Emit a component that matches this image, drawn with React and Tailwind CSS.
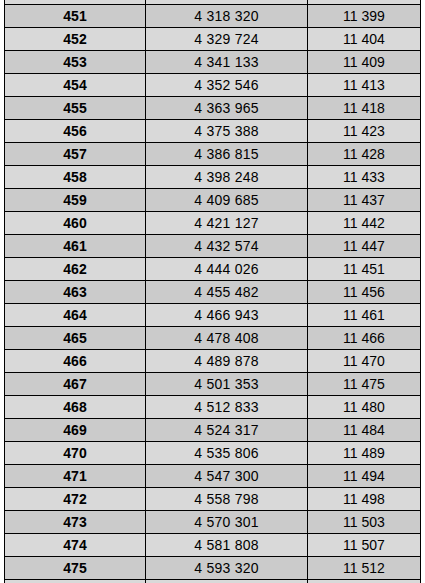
import React from "react";

const rows = [
  [450, "", ""],
  [451, "4 318 320", "11 399"],
  [452, "4 329 724", "11 404"],
  [453, "4 341 133", "11 409"],
  [454, "4 352 546", "11 413"],
  [455, "4 363 965", "11 418"],
  [456, "4 375 388", "11 423"],
  [457, "4 386 815", "11 428"],
  [458, "4 398 248", "11 433"],
  [459, "4 409 685", "11 437"],
  [460, "4 421 127", "11 442"],
  [461, "4 432 574", "11 447"],
  [462, "4 444 026", "11 451"],
  [463, "4 455 482", "11 456"],
  [464, "4 466 943", "11 461"],
  [465, "4 478 408", "11 466"],
  [466, "4 489 878", "11 470"],
  [467, "4 501 353", "11 475"],
  [468, "4 512 833", "11 480"],
  [469, "4 524 317", "11 484"],
  [470, "4 535 806", "11 489"],
  [471, "4 547 300", "11 494"],
  [472, "4 558 798", "11 498"],
  [473, "4 570 301", "11 503"],
  [474, "4 581 808", "11 507"],
  [475, "4 593 320", "11 512"],
  [476, "", ""],
];

export default function App() {
  return (
    <div
      className="h-[583px] w-[425px] overflow-hidden bg-white text-black"
      style={{ fontFamily: '"Liberation Sans", Arial, sans-serif' }}
    >
      <div className="ml-[4px] -mt-[18px] w-[417px] border-l border-black">
        {rows.map(([n, a, b]) => {
          const partial = a === "";
          return (
            <div
              key={n}
              className={`flex h-[23px] border-b border-black text-[14px] leading-[22px] ${
                n % 2 === 1 ? "bg-[#cbcbcb]" : "bg-[#d9d9d9]"
              }`}
            >
              <div className="w-[141px] border-r border-black text-center font-bold">
                {partial ? "" : n}
              </div>
              <div className="w-[162px] border-r border-black text-center tracking-[0.25px]">{a}</div>
              <div className="w-[113px] border-r border-black text-center">{b}</div>
            </div>
          );
        })}
      </div>
    </div>
  );
}
